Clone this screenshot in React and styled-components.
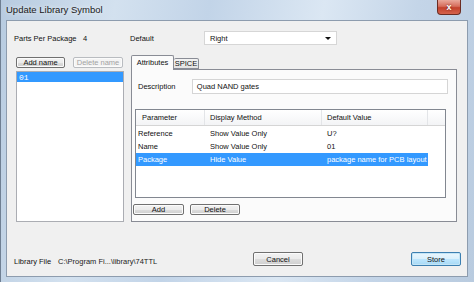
import React from 'react';
import styled, { createGlobalStyle } from 'styled-components';

const GlobalStyles = createGlobalStyle`
  html, body {
    margin: 0;
    padding: 0;
    background: #c9d8e8;
  }
  body {
    font-family: 'Liberation Sans', Arial, sans-serif;
    font-size: 7.5px;
    color: #111;
  }
  * {
    box-sizing: border-box;
  }
`;

const Window = styled.div`
  width: 474px;
  height: 282px;
  display: flex;
  flex-direction: column;
  overflow: hidden;
  border-left: 1px solid #6f7f92;
  background: linear-gradient(100deg, #b7cbe0 0%, #d3e1ef 22%, #c2d4e8 40%, #dbe7f3 62%, #c4d5e8 80%, #b9cbdf 100%);
`;

const TitleBar = styled.div`
  height: 20px;
  flex: none;
  display: flex;
  align-items: flex-start;
  padding-left: 5px;
`;

const Title = styled.span`
  margin-top: 4px;
  font-size: 9.5px;
  color: #1a1a1a;
  text-shadow: 0 0 5px rgba(255, 255, 255, 0.9);
`;

const CloseButton = styled.div`
  width: 24px;
  height: 15px;
  margin-left: auto;
  margin-right: 13px;
  display: flex;
  align-items: center;
  justify-content: center;
  border: 1px solid #6b2c22;
  border-top: none;
  border-radius: 0 0 4px 4px;
  background: linear-gradient(to bottom, #e9a99c 0%, #d66e5c 45%, #c2412c 55%, #d5634c 100%);
  color: #fff;
  font-size: 9px;
  font-weight: bold;
  text-shadow: 0 0 2px #5a1a10;
`;

const Client = styled.div`
  flex: 1;
  margin: 0 6px 5px 5px;
  display: flex;
  flex-direction: column;
  padding: 10px 6px 10px 7px;
  background: #f0f0f0;
  border: 1px solid #8d9cae;
`;

const TopRow = styled.div`
  height: 14px;
  display: flex;
  align-items: center;
`;

const Label = styled.span`
  width: ${({ w }) => w}px;
  flex: none;
  white-space: nowrap;
  color: ${({ muted }) => (muted ? '#333' : '#111')};
`;

const Combo = styled.div`
  width: 133px;
  height: 14px;
  display: flex;
  align-items: center;
  padding: 0 5px;
  background: #fff;
  border: 1px solid #d6d6d6;
`;

const ComboArrow = styled.span`
  margin-left: auto;
  width: 0;
  height: 0;
  border-left: 3px solid transparent;
  border-right: 3px solid transparent;
  border-top: 3px solid #111;
`;

const MainRow = styled.div`
  margin-top: 10px;
  height: 167px;
  display: flex;
  gap: 7px;
  padding-left: 2px;
`;

const LeftColumn = styled.div`
  width: 108px;
  display: flex;
  flex-direction: column;
`;

const ButtonRow = styled.div`
  display: flex;
  gap: ${({ gap }) => gap}px;
  margin-top: ${({ top }) => top || 0}px;
  margin-left: ${({ left }) => left || 0}px;
`;

const Button = styled.div`
  width: ${({ w }) => w}px;
  height: ${({ h }) => h || 11}px;
  flex: none;
  display: flex;
  align-items: center;
  justify-content: center;
  border-radius: 2px;
  border: 1px solid ${({ variant }) => (variant === 'disabled' ? '#b9bcc0' : variant === 'focus' ? '#3c7fb1' : '#707070')};
  background: ${({ variant }) =>
    variant === 'disabled'
      ? '#f4f4f4'
      : variant === 'focus'
      ? 'linear-gradient(to bottom, #eaf6fd 0%, #d9f0fc 50%, #bee6fd 51%, #a7d9f5 100%)'
      : 'linear-gradient(to bottom, #f2f2f2 0%, #ebebeb 50%, #dddddd 51%, #cfcfcf 100%)'};
  box-shadow: ${({ variant }) => (variant === 'focus' ? 'inset 0 0 0 1px #c4e5f6' : 'inset 0 0 0 1px #fbfbfb')};
  color: ${({ variant }) => (variant === 'disabled' ? '#a3a3a3' : '#111')};
  white-space: nowrap;
`;

const ListBox = styled.div`
  margin-top: 3px;
  flex: 1;
  background: #fff;
  border: 1px solid #abadb3;
  padding: 0;
`;

const ListItem = styled.div`
  height: 10px;
  display: flex;
  align-items: center;
  padding-left: 2px;
  background: ${({ selected }) => (selected ? '#3399ff' : 'transparent')};
  color: ${({ selected }) => (selected ? '#fff' : '#111')};
  font-family: 'Liberation Mono', 'Courier New', monospace;
  font-size: 8px;
`;

const TabArea = styled.div`
  width: 326px;
  flex: none;
  display: flex;
  flex-direction: column;
`;

const TabStrip = styled.div`
  height: 14px;
  display: flex;
  align-items: flex-end;
  position: relative;
  z-index: 1;
`;

const Tab = styled.div`
  width: ${({ w }) => w}px;
  height: ${({ active }) => (active ? 15 : 11)}px;
  margin-bottom: ${({ active }) => (active ? -1 : 0)}px;
  display: flex;
  align-items: center;
  justify-content: center;
  padding-bottom: ${({ active }) => (active ? 1 : 0)}px;
  border: 1px solid #898c95;
  border-bottom: ${({ active }) => (active ? 'none' : '1px solid #898c95')};
  border-left: ${({ first }) => (first ? '1px solid #898c95' : 'none')};
  background: ${({ active }) => (active ? '#fbfbfb' : 'linear-gradient(to bottom, #f3f3f3, #e3e3e3)')};
  border-radius: 2px 2px 0 0;
`;

const TabPanel = styled.div`
  flex: 1;
  display: flex;
  flex-direction: column;
  padding: 9px 8px 6px 3px;
  background: #fbfbfb;
  border: 1px solid #898c95;
`;

const DescRow = styled.div`
  height: 15px;
  display: flex;
  align-items: center;
`;

const DescLabel = styled.span`
  width: 57px;
  padding-left: 3px;
`;

const TextInput = styled.div`
  width: 257px;
  height: 15px;
  display: flex;
  align-items: center;
  padding-left: 4px;
  background: #fff;
  border: 1px solid #d5d5d5;
`;

const Table = styled.div`
  margin-top: 15px;
  width: 311px;
  height: 89px;
  background: #fff;
  border: 1px solid #828790;
`;

const Row = styled.div`
  display: grid;
  grid-template-columns: 69px 117px 106px 17px;
  height: ${({ header }) => (header ? 16 : 13)}px;
  margin-bottom: ${({ header }) => (header ? 1 : 0)}px;
  background: ${({ header }) => (header ? 'linear-gradient(to bottom, #ffffff, #f3f4f6)' : 'transparent')};
  border-bottom: ${({ header }) => (header ? '1px solid #d5d5d5' : 'none')};
`;

const Cell = styled.div`
  display: flex;
  align-items: center;
  padding-left: ${({ pad }) => pad}px;
  white-space: nowrap;
  overflow: hidden;
  color: ${({ selected }) => (selected ? '#fff' : '#111')};
  background: ${({ selected }) => (selected ? '#3399ff' : 'transparent')};
  border-right: ${({ header }) => (header ? '1px solid #e3e5e8' : 'none')};
`;

const BottomRow = styled.div`
  margin-top: 30px;
  height: 14px;
  display: flex;
  align-items: flex-end;
`;

const FileInfo = styled.div`
  width: 239px;
  flex: none;
  display: flex;
  padding-bottom: 0;
  color: #222;
`;

const Spacer = styled.div`
  flex: 1;
`;

const params = [
  { name: 'Reference', method: 'Show Value Only', value: 'U?' },
  { name: 'Name', method: 'Show Value Only', value: '01' },
  { name: 'Package', method: 'Hide Value', value: 'package name for PCB layout', selected: true },
];

export default function App() {
  return (
    <>
      <GlobalStyles />
      <Window>
        <TitleBar>
          <Title>Update Library Symbol</Title>
          <CloseButton>x</CloseButton>
        </TitleBar>
        <Client>
          <TopRow>
            <Label w={69}>Parts Per Package</Label>
            <Label w={47}>4</Label>
            <Label w={74}>Default</Label>
            <Combo>
              Right
              <ComboArrow />
            </Combo>
          </TopRow>

          <MainRow>
            <LeftColumn>
              <ButtonRow gap={8} top={2}>
                <Button w={49}>Add name</Button>
                <Button w={50} variant="disabled">Delete name</Button>
              </ButtonRow>
              <ListBox>
                <ListItem selected>01</ListItem>
              </ListBox>
            </LeftColumn>

            <TabArea>
              <TabStrip>
                <Tab w={43} active first>Attributes</Tab>
                <Tab w={25}>SPICE</Tab>
              </TabStrip>
              <TabPanel>
                <DescRow>
                  <DescLabel>Description</DescLabel>
                  <TextInput>Quad NAND gates</TextInput>
                </DescRow>
                <Table>
                  <Row header>
                    <Cell header pad={6}>Parameter</Cell>
                    <Cell header pad={5}>Display Method</Cell>
                    <Cell header pad={5}>Default Value</Cell>
                    <Cell />
                  </Row>
                  {params.map((p) => (
                    <Row key={p.name}>
                      <Cell pad={2} selected={p.selected}>{p.name}</Cell>
                      <Cell pad={5} selected={p.selected}>{p.method}</Cell>
                      <Cell pad={5} selected={p.selected}>{p.value}</Cell>
                      <Cell />
                    </Row>
                  ))}
                </Table>
                <ButtonRow gap={6} top={6} left={-2}>
                  <Button w={51}>Add</Button>
                  <Button w={50}>Delete</Button>
                </ButtonRow>
              </TabPanel>
            </TabArea>
          </MainRow>

          <BottomRow>
            <FileInfo>
              <Label w={44}>Library File</Label>
              <span>C:\Program Fi...\library\74TTL</span>
            </FileInfo>
            <Button w={50} h={14}>Cancel</Button>
            <Spacer />
            <Button w={50} h={14} variant="focus">Store</Button>
          </BottomRow>
        </Client>
      </Window>
    </>
  );
}
